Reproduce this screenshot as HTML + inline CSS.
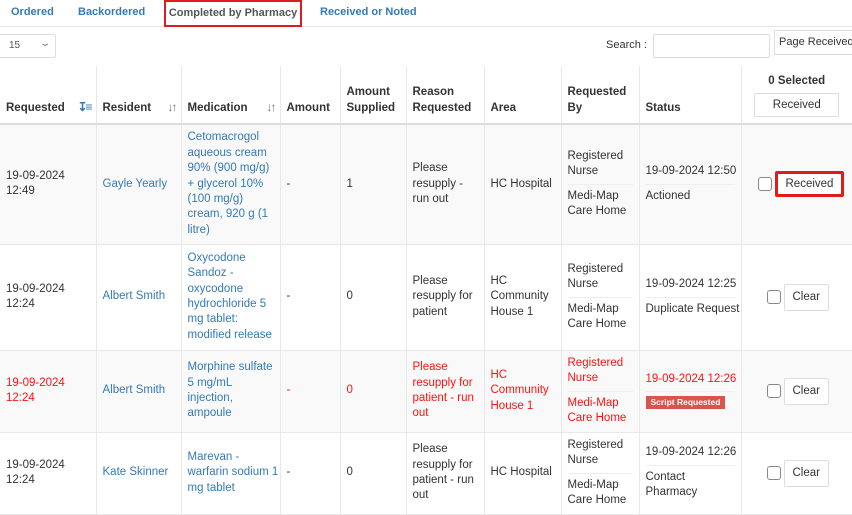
<!DOCTYPE html>
<html><head><meta charset="utf-8"><style>
*{box-sizing:border-box;margin:0;padding:0}
body{width:852px;height:508px;overflow:hidden;background:#fff;font-family:"Liberation Sans",Arial,sans-serif;font-size:11.5px;color:#333;position:relative}
.tab{position:absolute;top:6px;font-weight:bold;font-size:11px;color:#337ab7}
.tabline{position:absolute;top:26px;left:0;width:852px;height:1px;background:#e5e5e5}
.act{position:absolute;left:164px;top:0;width:138px;height:27px;border:2px solid #e01b1b;background:#fff;font-weight:bold;font-size:11px;color:#555;text-align:center;line-height:23px}
.sel{position:absolute;left:-2px;top:34px;width:58px;height:24px;border:1px solid #ddd;border-radius:2px;font-size:10px;padding:5px 0 0 10px;color:#555}
.sel span{position:absolute;right:6px;top:3px;font-size:10px;color:#777;transform:scaleX(1.4)}
table{position:absolute;top:66px;left:0;border-collapse:collapse;table-layout:fixed;width:852px}
td,th{border-right:1px solid #e8e8e8;border-bottom:1px solid #e8e8e8;padding:0 6px;vertical-align:middle;line-height:15.4px;text-align:left;white-space:nowrap;overflow:hidden}
th{font-weight:bold;vertical-align:bottom;padding-bottom:7px;border-bottom:2px solid #ddd;position:relative}
td:last-child,th:last-child{border-right:none}
.g td{background:#f9f9f9}
a{color:#337ab7;text-decoration:none}
.r td,.r a{color:#f11}
.sub{padding:4px 0}
.sub+.sub{border-top:1px solid #eee}
.ic{position:absolute;right:5px;bottom:8px;font-size:12px;color:#777;letter-spacing:-2px}
.btn{display:inline-block;border:1px solid #ddd;background:#fff;padding:0 8px;height:27px;line-height:25px;color:#333;border-radius:2px;vertical-align:middle}
.cb{display:inline-block;width:14px;height:14px;border:1px solid #888;border-radius:3px;vertical-align:middle;margin-right:3px;background:#fff}
.lab{display:inline-block;background:#d9534f;color:#fff;font-size:8.5px;font-weight:bold;padding:1px 5px;line-height:11px}
</style></head><body>
<div class="tab" style="left:11px">Ordered</div>
<div class="tab" style="left:78px">Backordered</div>
<div class="tabline"></div>
<div class="act">Completed by Pharmacy</div>
<div class="tab" style="left:320px">Received or Noted</div>
<div class="sel">15<span>&#8964;</span></div>
<div style="position:absolute;left:606px;top:39px;font-size:11px">Search :</div>
<div style="position:absolute;left:653px;top:34px;width:117px;height:24px;border:1px solid #ddd;border-radius:2px"></div>
<div style="position:absolute;left:774px;top:30px;width:82px;height:25px;border:1px solid #ddd;font-size:11px;padding:5px 0 0 4px;white-space:nowrap">Page Received</div>
<table>
<colgroup><col style="width:96px"><col style="width:85px"><col style="width:99px"><col style="width:60px"><col style="width:66px"><col style="width:78px"><col style="width:77px"><col style="width:78px"><col style="width:102px"><col style="width:111px"></colgroup>
<tr style="height:58px"><th>Requested<span class="ic" style="color:#337ab7">&#8615;&#8801;</span></th><th>Resident<span class="ic">&#8595;&#8593;</span></th><th>Medication<span class="ic">&#8595;&#8593;</span></th><th>Amount</th><th>Amount<br>Supplied</th><th>Reason<br>Requested</th><th>Area</th><th>Requested<br>By</th><th>Status</th><th style="text-align:center;padding:0;vertical-align:middle"><div style="margin-top:2px">0 Selected</div><div class="btn" style="width:85px;height:24px;line-height:22px;font-weight:normal;margin-top:4px">Received</div></th></tr>
<tr class="g" style="height:120px"><td>19-09-2024<br>12:49</td><td><a>Gayle Yearly</a></td><td><a>Cetomacrogol<br>aqueous cream<br>90% (900 mg/g)<br>+ glycerol 10%<br>(100 mg/g)<br>cream, 920 g (1<br>litre)</a></td><td>-</td><td>1</td><td>Please<br>resupply -<br>run out</td><td>HC Hospital</td><td><div class="sub">Registered<br>Nurse</div><div class="sub">Medi-Map<br>Care Home</div></td><td><div class="sub">19-09-2024 12:50</div><div class="sub">Actioned</div></td><td style="padding-left:16px"><span class="cb"></span><span class="btn" style="border:3px solid #e01b1b;height:26px;line-height:20px;padding:0 8px">Received</span></td></tr>
<tr style="height:106px"><td>19-09-2024<br>12:24</td><td><a>Albert Smith</a></td><td><a>Oxycodone<br>Sandoz -<br>oxycodone<br>hydrochloride 5<br>mg tablet:<br>modified release</a></td><td>-</td><td>0</td><td>Please<br>resupply for<br>patient</td><td>HC<br>Community<br>House 1</td><td><div class="sub">Registered<br>Nurse</div><div class="sub">Medi-Map<br>Care Home</div></td><td><div class="sub">19-09-2024 12:25</div><div class="sub">Duplicate Request</div></td><td style="padding-left:25px"><span class="cb"></span><span class="btn">Clear</span></td></tr>
<tr class="g r" style="height:82px"><td>19-09-2024<br>12:24</td><td><a style="color:#337ab7">Albert Smith</a></td><td><a style="color:#337ab7">Morphine sulfate<br>5 mg/mL<br>injection,<br>ampoule</a></td><td>-</td><td>0</td><td>Please<br>resupply for<br>patient - run<br>out</td><td>HC<br>Community<br>House 1</td><td><div class="sub">Registered<br>Nurse</div><div class="sub">Medi-Map<br>Care Home</div></td><td><div class="sub">19-09-2024 12:26</div><div class="sub" style="padding-top:3px"><span class="lab">Script Requested</span></div></td><td style="padding-left:25px"><span class="cb"></span><span class="btn">Clear</span></td></tr>
<tr style="height:82px"><td>19-09-2024<br>12:24</td><td><a>Kate Skinner</a></td><td><a>Marevan -<br>warfarin sodium 1<br>mg tablet</a></td><td>-</td><td>0</td><td>Please<br>resupply for<br>patient - run<br>out</td><td>HC Hospital</td><td><div class="sub">Registered<br>Nurse</div><div class="sub">Medi-Map<br>Care Home</div></td><td><div class="sub">19-09-2024 12:26</div><div class="sub">Contact<br>Pharmacy</div></td><td style="padding-left:25px"><span class="cb"></span><span class="btn">Clear</span></td></tr>
</table>
</body></html>
